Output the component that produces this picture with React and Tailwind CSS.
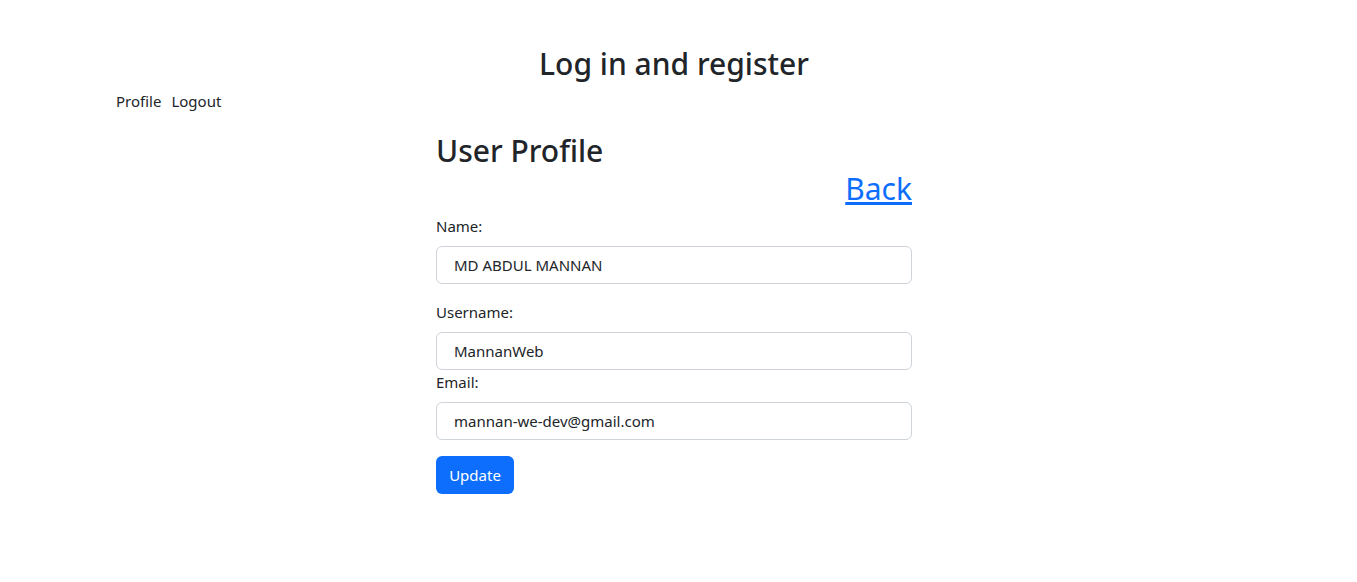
import React from 'react';

const fields = [
    { label: 'Name:', value: 'MD ABDUL MANNAN', gap: 'mb-4' },
    { label: 'Username:', value: 'MannanWeb', gap: '' },
    { label: 'Email:', value: 'mannan-we-dev@gmail.com', gap: 'mb-4' },
];

export default function App() {
    return (
        <div className="min-h-screen bg-white text-[#212529] font-['Noto_Sans',sans-serif]">
            <div className="w-[1348px]">
                <div className="mx-auto w-[1140px] px-3">
                    {/* Header */}
                    <h1 className="pt-[45px] text-center text-[30px] font-medium leading-[38px]">
                        Log in and register
                    </h1>
                    <nav className="mt-[6px] flex gap-[10px] text-[15px] leading-6">
                        <a href="#">Profile</a>
                        <a href="#">Logout</a>
                    </nav>

                    {/* Profile form */}
                    <div className="mx-auto mt-[19px] w-[476px]">
                        <h2 className="text-[30px] font-medium leading-[38px]">User Profile</h2>
                        <div className="flex justify-end">
                            <a href="#" className="text-[30px] leading-[38px] text-[#0d6efd] underline">
                                Back
                            </a>
                        </div>
                        <form className="mt-[6px]">
                            {fields.map((f) => (
                                <div key={f.label} className={f.gap}>
                                    <label className="mb-2 block text-[15px] leading-6">{f.label}</label>
                                    <input
                                        readOnly
                                        value={f.value}
                                        className="block h-[38px] w-full rounded-md border border-[#ced4da] px-[17px] text-[15px] text-[#212529] outline-none"
                                    />
                                </div>
                            ))}
                            <button
                                type="button"
                                className="h-[38px] w-[78px] rounded-md bg-[#0d6efd] text-[15px] text-white"
                            >
                                Update
                            </button>
                        </form>
                    </div>
                </div>
            </div>
        </div>
    );
}
